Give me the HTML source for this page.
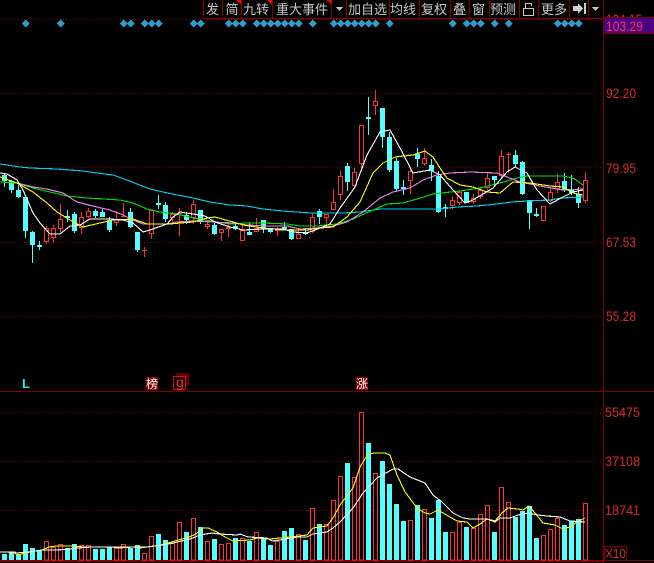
<!DOCTYPE html>
<html lang="zh"><head><meta charset="utf-8"><title>K线</title>
<style>
html,body{margin:0;padding:0;background:#000;width:654px;height:563px;overflow:hidden}
svg{display:block}
text{font-family:"Liberation Sans",sans-serif}
.c{font-family:"WenQuanYi Zen Hei","Noto Sans CJK SC",sans-serif;font-size:13px;fill:#c8c8c8}
.n{fill:#d92b2b;font-size:14px}
polyline{stroke-width:1.1}
</style></head><body>
<svg width="654" height="563" viewBox="0 0 654 563" xmlns="http://www.w3.org/2000/svg">
<rect width="654" height="563" fill="#000"/>
<g shape-rendering="crispEdges">
<!-- grid -->
<path d="M0 19.5H603M0 93.5H603M0 167.5H603M0 242.5H603M0 316.5H603M0 412.5H603M0 461.5H603M0 510.5H603" stroke="#8a0000" stroke-width="1" stroke-dasharray="1 2" fill="none"/>
<!-- frame -->
<path d="M603.5 0V563M0 391.5H654M0 560.5H654" stroke="#800000" fill="none"/>
<rect x="0" y="560" width="604" height="2" fill="#800000"/>
<!-- toolbar -->
<path d="M203.5 0V18M222.5 0V18M241.5 0V18M272.5 0V18M331.5 0V18M346.5 0V18M389.5 0V18M419.5 0V18M450.5 0V18M469.5 0V18M489.5 0V18M519.5 0V18M538.5 0V18M569.5 0V18M588.5 0V18M203 18.5H603" stroke="#8a0000" fill="none"/>
<path d="M236 0h5v5zM267 0h5v5zM327 0h4.500v5z" fill="#f00"/>
<!-- diamonds -->
<path fill="#2f9ccb" d="M25.500 19.500l4 4-4 4-4-4zM60.500 19.500l4 4-4 4-4-4zM123.500 19.500l4 4-4 4-4-4zM130.500 19.500l4 4-4 4-4-4zM144.500 19.500l4 4-4 4-4-4zM151.500 19.500l4 4-4 4-4-4zM158.500 19.500l4 4-4 4-4-4zM193.500 19.500l4 4-4 4-4-4zM200.500 19.500l4 4-4 4-4-4zM228.500 19.500l4 4-4 4-4-4zM235.500 19.500l4 4-4 4-4-4zM242.500 19.500l4 4-4 4-4-4zM256.500 19.500l4 4-4 4-4-4zM263.500 19.500l4 4-4 4-4-4zM270.500 19.500l4 4-4 4-4-4zM277.500 19.500l4 4-4 4-4-4zM284.500 19.500l4 4-4 4-4-4zM291.500 19.500l4 4-4 4-4-4zM298.500 19.500l4 4-4 4-4-4zM312.500 19.500l4 4-4 4-4-4zM333.500 19.500l4 4-4 4-4-4zM340.500 19.500l4 4-4 4-4-4zM347.500 19.500l4 4-4 4-4-4zM354.500 19.500l4 4-4 4-4-4zM361.500 19.500l4 4-4 4-4-4zM368.500 19.500l4 4-4 4-4-4zM375.500 19.500l4 4-4 4-4-4zM389.500 19.500l4 4-4 4-4-4zM452.500 19.500l4 4-4 4-4-4zM466.500 19.500l4 4-4 4-4-4zM473.500 19.500l4 4-4 4-4-4zM480.500 19.500l4 4-4 4-4-4zM494.500 19.500l4 4-4 4-4-4zM508.500 19.500l4 4-4 4-4-4zM557.500 19.500l4 4-4 4-4-4zM564.500 19.500l4 4-4 4-4-4zM571.500 19.500l4 4-4 4-4-4zM578.500 19.500l4 4-4 4-4-4z"/>
<!-- cyan candle wicks -->
<path stroke="#54ffff" fill="none" d="M4.500 173V187M11.500 180V193M18.500 185V198M25.500 197V238M32.500 231V263M39.500 241V250M67.500 210V222M74.500 212V233M95.500 209V218M102.500 209V217M109.500 217V232M130.500 208V228M137.500 232V252M158.500 195V209M165.500 202V222M186.500 212V224M200.500 210V224M214.500 223V235M235.500 222V230M249.500 223V235M263.500 220V233M270.500 228V233M284.500 222V230M291.500 229V240M305.500 228V235M319.500 209V224M347.500 163V191M368.500 97V135M382.500 108V148M389.500 132V172M396.500 158V192M403.500 180V195M417.500 148V167M431.500 159V181M438.500 171V213M445.500 204V217M494.500 176V187M515.500 150V167M522.500 161V195M529.500 200V229M536.500 208V217M564.500 173V192M571.500 175V195M578.500 187V208"/>
<!-- cyan candle bodies -->
<path fill="#54ffff" d="M2 175h5v6h-5zM9 181h5v9h-5zM16 190h5v7h-5zM23 197h5v34h-5zM30 232h5v13h-5zM37 245h5v2h-5zM65 216h5v2h-5zM72 214h5v17h-5zM93 211h5v5h-5zM100 212h5v5h-5zM107 220h5v10h-5zM128 212h5v15h-5zM135 232h5v18h-5zM156 203h5v2h-5zM163 205h5v14h-5zM184 215h5v5h-5zM198 210h5v12h-5zM212 225h5v9h-5zM233 226h5v3h-5zM247 232h5v3h-5zM261 220h5v8h-5zM268 228h5v4h-5zM282 227h5v2h-5zM289 229h5v10h-5zM303 232h5v2h-5zM317 211h5v6h-5zM345 166h5v16h-5zM366 117h5v2h-5zM380 108h5v29h-5zM387 137h5v33h-5zM394 161h5v28h-5zM401 187h5v2h-5zM415 154h5v5h-5zM429 165h5v6h-5zM436 176h5v36h-5zM443 207h5v2h-5zM464 192h5v11h-5zM492 176h5v4h-5zM513 155h5v9h-5zM520 162h5v32h-5zM527 200h5v13h-5zM534 214h5v2h-5zM562 181h5v9h-5zM569 189h5v4h-5zM576 194h5v9h-5z"/>
<!-- red candle wicks -->
<path stroke="#ff3232" fill="none" d="M46.500 226V228M46.500 242V244M53.500 225V228M53.500 238V243M60.500 204V219M60.500 229V232M81.500 212V217M81.500 228V234M88.500 208V211M88.500 217V218M116.500 211V219M116.500 223V226M123.500 203V216M144.500 247V257M151.500 234V239M172.500 212V214M172.500 218V222M179.500 208V236M193.500 200V204M193.500 218V224M207.500 222V224M207.500 227V229M221.500 233V241M228.500 222V227M228.500 229V237M242.500 223V230M256.500 218V228M277.500 227V236M298.500 229V234M312.500 213V217M312.500 232V233M326.500 218V227M333.500 189V202M340.500 171V176M340.500 195V200M354.500 168V172M354.500 186V188M361.500 164V168M375.500 90V101M375.500 106V115M410.500 168V171M410.500 181V194M424.500 148V158M424.500 164V166M452.500 196V200M452.500 206V209M459.500 190V192M459.500 203V205M473.500 194V198M473.500 202V204M480.500 187V190M480.500 197V199M487.500 173V178M487.500 188V190M501.500 150V156M501.500 176V178M508.500 152V173M550.500 188V192M550.500 201V202M557.500 174V182M557.500 189V193M585.500 172V180M585.500 201V203"/>
<!-- red candle bodies -->
<path stroke="#ff3232" fill="none" d="M44.500 228.500h4v13h-4zM51.500 228.500h4v9h-4zM58.500 219.500h4v9h-4zM79.500 217.500h4v10h-4zM86.500 211.500h4v5h-4zM114.500 219.500h4v3h-4zM149.500 210.500h4v23h-4zM170.500 214.500h4v3h-4zM191.500 204.500h4v13h-4zM205.500 224.500h4v2h-4zM219.500 229.500h4v3h-4zM226.500 227.500h4v1h-4zM240.500 230.500h4v10h-4zM254.500 228.500h4v3h-4zM296.500 234.500h4v4h-4zM310.500 217.500h4v14h-4zM324.500 214.500h4v3h-4zM331.500 202.500h4v7h-4zM338.500 176.500h4v18h-4zM352.500 172.500h4v13h-4zM359.500 125.500h4v38h-4zM373.500 101.500h4v4h-4zM408.500 171.500h4v9h-4zM422.500 158.500h4v5h-4zM450.500 200.500h4v5h-4zM457.500 192.500h4v10h-4zM471.500 198.500h4v3h-4zM478.500 190.500h4v6h-4zM485.500 178.500h4v9h-4zM499.500 156.500h4v19h-4zM541.500 206.500h4v14h-4zM548.500 192.500h4v8h-4zM555.500 182.500h4v6h-4zM583.500 180.500h4v20h-4zM142 250.500h5M506 154.500h5M275 230.500h5M177 213.500h5M121 216.500h5"/>
<!-- MA lines -->
<polyline fill="none" stroke="#00d0f0" points="0,164 20,167 30,168 57,169 83,171 97,173 113,175 127,180 137,184 150,189 163,192 177,195 193,198 210,202 230,205 247,206 263,209 283,211 310,213 320,213 343,213 360,212 380,209 407,209 440,209 457,207 477,206 497,204 512,202 527,201 550,200 562,198 583,197"/>
<polyline fill="none" stroke="#00e000" points="0,182 17,183 33,188 50,192 67,196 87,198 120,200 133,203 147,209 160,212 177,214 193,218 217,222 230,224 247,223 263,223 287,224 300,226 317,226 337,224 353,219 373,210 387,204 403,203 417,199 433,194 460,191 480,188 500,183 517,178 527,176 563,176 573,178 583,185"/>
<polyline fill="none" stroke="#f080f0" points="17,183 33,187 47,189 63,193 77,202 97,207 110,210 123,215 133,220 143,224 167,224 177,222 193,221 213,222 233,223 247,225 267,226 287,226 300,229 317,228 333,226 347,222 363,212 380,198 393,192 410,188 423,180 437,175 450,173 470,172 497,173 507,177 520,182 540,186 563,190 583,189"/>
<polyline fill="none" stroke="#ffff00" points="0,177 17,183 33,192 47,203 57,212 70,220 83,227 100,223 113,220 133,219 147,224 170,224 180,223 193,222 207,218 215,217 233,222 243,225 263,228 283,230 307,230 320,228 333,227 347,217 360,202 373,173 383,163 395,157 413,155 425,151 433,157 440,168 447,178 460,185 473,187 487,192 500,193 513,182 530,183 550,186 563,187 573,193 583,195"/>
<polyline fill="none" stroke="#fff" points="0,173 7,174 17,180 23,190 33,213 40,223 50,234 60,234 70,226 80,225 90,219 110,219 123,220 133,223 143,232 150,230 167,224 173,217 180,212 193,214 205,216 215,222 230,227 243,230 263,229 283,229 293,232 307,233 320,228 330,224 340,208 355,187 367,155 380,132 390,130 400,148 413,173 430,170 440,175 453,190 465,203 473,200 493,188 507,172 515,167 527,173 537,190 550,204 563,197 573,192 583,190"/>
<!-- volume cyan -->
<path fill="#54ffff" d="M2 554h5v6h-5zM9 553h5v7h-5zM16 554h5v6h-5zM23 544h5v16h-5zM30 548h5v12h-5zM37 551h5v9h-5zM65 548h5v12h-5zM72 544h5v16h-5zM93 549h5v11h-5zM100 549h5v11h-5zM107 547h5v13h-5zM128 548h5v12h-5zM135 545h5v15h-5zM156 534h5v26h-5zM163 540h5v20h-5zM184 532h5v28h-5zM198 527h5v33h-5zM212 539h5v21h-5zM233 538h5v22h-5zM247 541h5v19h-5zM261 538h5v22h-5zM268 545h5v15h-5zM282 531h5v29h-5zM289 528h5v32h-5zM303 540h5v20h-5zM317 524h5v36h-5zM345 463h5v97h-5zM366 443h5v117h-5zM380 461h5v99h-5zM387 484h5v76h-5zM394 504h5v56h-5zM401 521h5v39h-5zM415 505h5v55h-5zM429 518h5v42h-5zM436 500h5v60h-5zM443 532h5v28h-5zM464 527h5v33h-5zM492 532h5v28h-5zM513 517h5v43h-5zM520 511h5v49h-5zM527 506h5v54h-5zM534 538h5v22h-5zM562 525h5v35h-5zM569 521h5v39h-5zM576 519h5v41h-5z"/>
<!-- volume red -->
<path stroke="#ff3232" fill="none" d="M44.500 541.500h4V560h-4zM51.500 547.500h4V560h-4zM58.500 544.500h4V560h-4zM79.500 545.500h4V560h-4zM86.500 545.500h4V560h-4zM114.500 548.500h4V560h-4zM121.500 544.500h4V560h-4zM142.500 553.500h4V560h-4zM149.500 536.500h4V560h-4zM170.500 543.500h4V560h-4zM177.500 522.500h4V560h-4zM191.500 518.500h4V560h-4zM205.500 541.500h4V560h-4zM219.500 544.500h4V560h-4zM226.500 543.500h4V560h-4zM240.500 538.500h4V560h-4zM254.500 532.500h4V560h-4zM275.500 541.500h4V560h-4zM296.500 534.500h4V560h-4zM310.500 508.500h4V560h-4zM324.500 524.500h4V560h-4zM331.500 500.500h4V560h-4zM338.500 476.500h4V560h-4zM352.500 477.500h4V560h-4zM359.500 412.500h4V560h-4zM373.500 473.500h4V560h-4zM408.500 520.500h4V560h-4zM422.500 509.500h4V560h-4zM450.500 532.500h4V560h-4zM457.500 522.500h4V560h-4zM471.500 528.500h4V560h-4zM478.500 514.500h4V560h-4zM485.500 505.500h4V560h-4zM499.500 487.500h4V560h-4zM506.500 502.500h4V560h-4zM541.500 535.500h4V560h-4zM548.500 529.500h4V560h-4zM555.500 518.500h4V560h-4zM583.500 503.500h4V560h-4z"/>
<!-- volume MA -->
<polyline fill="none" stroke="#ffff00" points="0,552 7,552 14,553 18,555 25,553 35,551 42,550 49,547 56,546 70,546 84,547 98,547 112,547 119,548 133,547 140,548 154,546 161,545 168,543 175,541 182,539 189,537 196,534 203,528 208,528 217,532 225,537 233,541 250,540 257,538 270,539 280,538 290,537 307,535 313,528 327,526 333,518 340,505 353,488 360,467 368,454 375,453 385,453 390,455 397,475 405,492 417,508 425,513 430,514 438,510 450,517 457,521 467,522 473,528 480,524 487,519 495,521 502,513 508,508 518,509 523,510 529,506 535,513 543,523 555,525 563,529 570,527 577,522 585,518"/>
<polyline fill="none" stroke="#fff" points="0,552 15,552 16,553 28,552 35,551 43,550 57,550 70,549 78,548 92,547 113,547 133,547 147,547 163,545 173,543 190,539 200,535 212,533 220,534 237,535 240,534 248,537 267,538 272,541 280,540 297,537 307,537 313,534 327,532 333,528 340,522 353,508 363,493 377,478 393,469 398,469 410,477 425,483 433,495 442,502 453,513 463,518 470,519 487,519 495,522 500,518 510,518 518,515 528,513 538,515 547,516 560,517 570,521 585,522"/>
<!-- price box -->
<rect x="604" y="18" width="50" height="15" fill="#4b0082"/>
<path d="M603 17.500H654M603 33.500H654" stroke="#800000" fill="none"/>
<!-- icons -->
<path d="M336 7h7l-3.500 4zM592 7h7l-3.500 4z" fill="#c8c8c8"/>
<path d="M573 6h5V3l5 5.500-5 5.500v-3h-5zM584 3h2v11h-2z" fill="#d0d0d0"/>
<path d="M523.500 8.500h10v7h-10zM525.500 8V3.500h6V6" stroke="#c8c8c8" fill="none"/>
<!-- markers -->
<rect x="146" y="377" width="12" height="13" fill="#800000"/>
<rect x="356" y="377" width="12" height="13" fill="#800000"/>
<rect x="176" y="373" width="13" height="13" fill="#600000"/>
<rect x="173.500" y="376.500" width="12" height="13" fill="#000" stroke="#f00"/>
<rect x="604.500" y="546.500" width="22" height="14" fill="none" stroke="#800000"/>
</g>
<!-- toolbar text -->
<text class="c" x="206" y="14">发</text>
<text class="c" x="225.500" y="14">简</text>
<text class="c" x="243" y="14">九转</text>
<text class="c" x="276" y="14">重大事件</text>
<text class="c" x="348" y="14">加自选</text>
<text class="c" x="390" y="14">均线</text>
<text class="c" x="421" y="14">复权</text>
<text class="c" x="453" y="14">叠</text>
<text class="c" x="472" y="14">窗</text>
<text class="c" x="490" y="14">预测</text>
<text class="c" x="541" y="14">更多</text>
<!-- axis labels -->
<text class="n" x="606" y="24" textLength="36" lengthAdjust="spacingAndGlyphs" clip-path="url(#k)" fill="#d92b2b">104.15</text>
<clipPath id="k"><rect x="604" y="12" width="50" height="5"/></clipPath>
<text x="606" y="31" font-size="14" fill="#ff3060" textLength="37" lengthAdjust="spacingAndGlyphs">103.29</text>
<text class="n" x="606" y="98" textLength="30" lengthAdjust="spacingAndGlyphs">92.20</text>
<text class="n" x="606" y="173" textLength="30" lengthAdjust="spacingAndGlyphs">79.95</text>
<text class="n" x="606" y="247" textLength="30" lengthAdjust="spacingAndGlyphs">67.53</text>
<text class="n" x="606" y="321" textLength="30" lengthAdjust="spacingAndGlyphs">55.28</text>
<text class="n" x="605" y="417" textLength="35" lengthAdjust="spacingAndGlyphs">55475</text>
<text class="n" x="605" y="466" textLength="35" lengthAdjust="spacingAndGlyphs">37108</text>
<text class="n" x="605" y="515" textLength="35" lengthAdjust="spacingAndGlyphs">18741</text>
<text class="n" x="605" y="558" textLength="21" lengthAdjust="spacingAndGlyphs" style="font-size:13px">X10</text>
<!-- marker text -->
<text x="22" y="388" font-size="13" font-weight="bold" fill="#19f0f0">L</text>
<text x="146" y="388" style="font-family:'WenQuanYi Zen Hei','Noto Sans CJK SC',sans-serif" font-size="12" fill="#fff">榜</text>
<text x="176" y="387" font-size="14" fill="#ff3030">g</text>
<text x="356" y="388" style="font-family:'WenQuanYi Zen Hei','Noto Sans CJK SC',sans-serif" font-size="12" fill="#fff">涨</text>
</svg>
</body></html>
